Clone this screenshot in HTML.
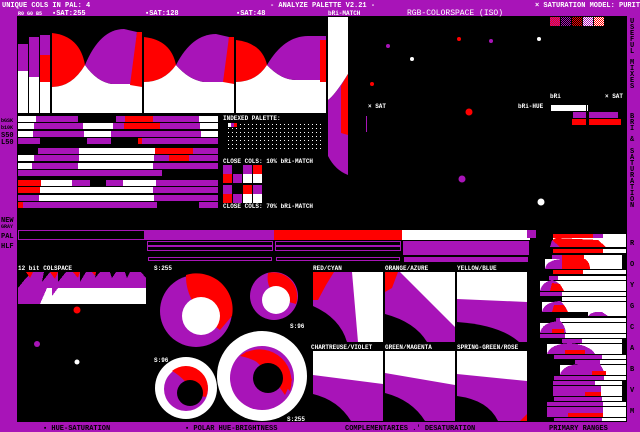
<!DOCTYPE html>
<html><head><meta charset="utf-8"><style>
html,body{margin:0;padding:0;background:#000;width:640px;height:432px;overflow:hidden}
svg{display:block}
text{font-family:"Liberation Mono",monospace;font-weight:bold;font-size:7px;fill:#fff}
.k{fill:#000}
</style></head><body>
<svg width="640" height="432" viewBox="0 0 640 432" xmlns="http://www.w3.org/2000/svg" shape-rendering="crispEdges">
<defs>
<pattern id="d1" width="2" height="2" patternUnits="userSpaceOnUse"><rect width="2" height="2" fill="#ff0000"/><rect width="1" height="1" fill="#a814b8"/><rect x="1" y="1" width="1" height="1" fill="#a814b8"/></pattern>
<pattern id="d2" width="2" height="2" patternUnits="userSpaceOnUse"><rect width="2" height="2" fill="#000"/><rect width="1" height="1" fill="#a814b8"/><rect x="1" y="1" width="1" height="1" fill="#a814b8"/></pattern>
<pattern id="d3" width="2" height="2" patternUnits="userSpaceOnUse"><rect width="2" height="2" fill="#000"/><rect width="1" height="1" fill="#ff0000"/><rect x="1" y="1" width="1" height="1" fill="#ff0000"/></pattern>
<pattern id="d4" width="2" height="2" patternUnits="userSpaceOnUse"><rect width="2" height="2" fill="#fff"/><rect width="1" height="1" fill="#a814b8"/><rect x="1" y="1" width="1" height="1" fill="#a814b8"/></pattern>
<pattern id="d5" width="2" height="2" patternUnits="userSpaceOnUse"><rect width="2" height="2" fill="#fff"/><rect width="1" height="1" fill="#ff0000"/><rect x="1" y="1" width="1" height="1" fill="#ff0000"/></pattern>
<pattern id="dots" width="4" height="4" patternUnits="userSpaceOnUse"><rect width="1" height="1" fill="#fff"/></pattern>
</defs>
<rect width="640" height="432" fill="#000"/>
<g fill="#a814b8">
<rect x="0" y="0" width="640" height="16"/>
<rect x="0" y="0" width="17" height="432"/>
<rect x="627" y="0" width="13" height="432"/>
<rect x="0" y="422" width="640" height="10"/>
</g>
<text x="2" y="7">UNIQUE COLS IN PAL: 4</text>
<text x="270" y="7">- ANALYZE PALETTE V2.21 -</text>
<text x="535" y="7">× SATURATION MODEL: PURITY</text>
<text x="18" y="15" style="font-size:5px">R0 G0 B5</text>
<text x="52" y="15">▪SAT:255</text>
<text x="145" y="15">▪SAT:128</text>
<text x="236" y="15">▪SAT:48</text>
<text x="328" y="15" style="font-size:6px">bRi-MATCH</text>
<text x="407" y="15" style="font-size:8px;font-weight:normal">RGB-COLORSPACE (ISO)</text>

<rect x="18" y="44" width="10" height="27" fill="#a814b8"/><rect x="18" y="71" width="10" height="42" fill="#fff"/>
<rect x="29" y="37" width="10" height="40" fill="#a814b8"/><rect x="29" y="77" width="10" height="36" fill="#fff"/>
<rect x="40" y="35" width="10" height="20" fill="#a814b8"/><rect x="40" y="55" width="10" height="27" fill="#ff0000"/><rect x="40" y="82" width="10" height="31" fill="#fff"/>

<g shape-rendering="auto">
<g transform="translate(52,0)">
<path d="M0 33 Q28 36 33 65 Q20 87 0 87Z" fill="#ff0000"/>
<path d="M0 87 Q20 87 33 65 Q45 82 60 84 L90 84 L90 113 L0 113Z" fill="#fff"/>
<path d="M33 65 Q48 29 72 29 L85 32 L80 84 L60 84 Q45 82 33 65Z" fill="#a814b8"/>
<path d="M85 32 L90 32 L90 87 L78 85Z" fill="#ff0000"/>
</g>
<g transform="translate(144,0)">
<path d="M0 37 Q27 40 32 65 Q20 82 0 82Z" fill="#ff0000"/>
<path d="M0 82 Q20 82 32 65 Q45 80 60 82 L90 82 L90 113 L0 113Z" fill="#fff"/>
<path d="M32 65 Q48 34 72 34 L85 37 L82 82 L60 82 Q45 80 32 65Z" fill="#a814b8"/>
<path d="M85 37 L90 37 L90 84 L79 82Z" fill="#ff0000"/>
</g>
<g transform="translate(236,0)">
<path d="M0 40 Q26 43 31 65 Q20 82 0 82Z" fill="#ff0000"/>
<path d="M0 82 Q20 82 31 65 Q45 80 60 80 L90 80 L90 113 L0 113Z" fill="#fff"/>
<path d="M31 65 Q48 36 72 36 L90 36 L90 80 L60 80 Q45 80 31 65Z" fill="#a814b8"/>
<path d="M88 40 L90 40 L90 80 L84 80Z" fill="#ff0000"/>
</g>
<rect x="320" y="40" width="6" height="42" fill="#ff0000"/><rect x="320" y="82" width="6" height="31" fill="#fff"/>
<path d="M328 17 L348 17 L348 74 Q335 95 328 100Z" fill="#fff"/>
<path d="M328 100 Q335 95 348 74 L348 175 Q335 170 328 156Z" fill="#a814b8"/>
<path d="M341 86 L348 74 L348 135 L341 133Z" fill="#ff0000"/>
</g>

<rect x="550" y="17" width="10" height="9" fill="url(#d1)"/>
<rect x="561" y="17" width="10" height="9" fill="url(#d2)"/>
<rect x="572" y="17" width="10" height="9" fill="url(#d3)"/>
<rect x="583" y="17" width="10" height="9" fill="url(#d4)"/>
<rect x="594" y="17" width="10" height="9" fill="url(#d5)"/>

<g shape-rendering="auto">
<circle cx="388" cy="46" r="2" fill="#a814b8"/>
<circle cx="459" cy="39" r="2" fill="#ff0000"/>
<circle cx="491" cy="41" r="2" fill="#a814b8"/>
<circle cx="539" cy="39" r="2" fill="#fff"/>
<circle cx="412" cy="59" r="2" fill="#fff"/>
<circle cx="372" cy="84" r="2" fill="#ff0000"/>
<circle cx="469" cy="112" r="3.5" fill="#ff0000"/>
<circle cx="462" cy="179" r="3.5" fill="#a814b8"/>
<circle cx="541" cy="202" r="3.5" fill="#fff"/>
</g>
<rect x="366" y="116" width="1" height="16" fill="#a814b8"/>
<text x="368" y="108" style="font-size:6px">× SAT</text>
<text x="518" y="108" style="font-size:6px">bRi-HUE</text>
<text x="550" y="98" style="font-size:6px">bRi</text>
<text x="605" y="98" style="font-size:6px">× SAT</text>
<rect x="551" y="105" width="35" height="6" fill="#fff"/><rect x="587" y="105" width="1" height="6" fill="#fff"/>
<rect x="573" y="112" width="13" height="6" fill="#a814b8"/><rect x="589" y="112" width="29" height="6" fill="#a814b8"/>
<rect x="572" y="119" width="14" height="6" fill="#ff0000"/><rect x="589" y="119" width="32" height="6" fill="#ff0000"/>

<g style="font-size:7px">
<text class="k" x="630" y="23">U</text><text class="k" x="630" y="29">S</text><text class="k" x="630" y="35">E</text><text class="k" x="630" y="41">F</text><text class="k" x="630" y="47">U</text><text class="k" x="630" y="53">L</text>
<text class="k" x="630" y="64">M</text><text class="k" x="630" y="70">I</text><text class="k" x="630" y="76">X</text><text class="k" x="630" y="82">E</text><text class="k" x="630" y="88">S</text>
<text class="k" x="630" y="118">B</text><text class="k" x="630" y="124">R</text><text class="k" x="630" y="130">I</text>
<text class="k" x="630" y="141">&amp;</text>
<text class="k" x="630" y="153">S</text><text class="k" x="630" y="159">A</text><text class="k" x="630" y="165">T</text><text class="k" x="630" y="171">U</text><text class="k" x="630" y="177">R</text><text class="k" x="630" y="183">A</text><text class="k" x="630" y="189">T</text><text class="k" x="630" y="195">I</text><text class="k" x="630" y="201">O</text><text class="k" x="630" y="207">N</text>
<text class="k" x="630" y="245">R</text><text class="k" x="630" y="266">O</text><text class="k" x="630" y="287">Y</text><text class="k" x="630" y="308">G</text><text class="k" x="630" y="329">C</text><text class="k" x="630" y="350">A</text><text class="k" x="630" y="371">B</text><text class="k" x="630" y="392">V</text><text class="k" x="630" y="413">M</text>
</g>

<text class="k" x="1" y="122" style="font-size:5px">bGSK</text>
<text class="k" x="1" y="129" style="font-size:5px">b10K</text>
<text class="k" x="1" y="137">S50</text>
<text class="k" x="1" y="144">L50</text>
<text class="k" x="1" y="222">NEW</text>
<text class="k" x="1" y="228" style="font-size:5px">GRAY</text>
<text class="k" x="1" y="238">PAL</text>
<text class="k" x="1" y="248">HLF</text>

<g>
<rect x="18" y="116" width="18" height="6" fill="#fff"/><rect x="36" y="116" width="42" height="6" fill="#a814b8"/><rect x="116" y="116" width="9" height="6" fill="#a814b8"/><rect x="125" y="116" width="28" height="6" fill="#ff0000"/><rect x="153" y="116" width="46" height="6" fill="#a814b8"/><rect x="199" y="116" width="19" height="6" fill="#fff"/>
<rect x="18" y="123" width="16" height="6" fill="#fff"/><rect x="34" y="123" width="49" height="6" fill="#a814b8"/><rect x="83" y="123" width="30" height="6" fill="#fff"/><rect x="113" y="123" width="11" height="6" fill="#a814b8"/><rect x="124" y="123" width="36" height="6" fill="#ff0000"/><rect x="160" y="123" width="40" height="6" fill="#a814b8"/><rect x="200" y="123" width="18" height="6" fill="#fff"/>
<rect x="18" y="131" width="15" height="6" fill="#fff"/><rect x="33" y="131" width="51" height="6" fill="#a814b8"/><rect x="84" y="131" width="27" height="6" fill="#fff"/><rect x="111" y="131" width="90" height="6" fill="#a814b8"/><rect x="201" y="131" width="17" height="6" fill="#fff"/>
<rect x="18" y="138" width="22" height="6" fill="#a814b8"/><rect x="87" y="138" width="24" height="6" fill="#a814b8"/><rect x="138" y="138" width="4" height="6" fill="#ff0000"/><rect x="142" y="138" width="76" height="6" fill="#a814b8"/>
<rect x="38" y="148" width="41" height="6" fill="#a814b8"/><rect x="79" y="148" width="76" height="6" fill="#fff"/><rect x="155" y="148" width="38" height="6" fill="#ff0000"/><rect x="193" y="148" width="25" height="6" fill="#a814b8"/>
<rect x="18" y="155" width="16" height="6" fill="#fff"/><rect x="34" y="155" width="45" height="6" fill="#a814b8"/><rect x="79" y="155" width="75" height="6" fill="#fff"/><rect x="154" y="155" width="15" height="6" fill="#a814b8"/><rect x="169" y="155" width="20" height="6" fill="#ff0000"/><rect x="189" y="155" width="29" height="6" fill="#a814b8"/>
<rect x="18" y="163" width="14" height="6" fill="#fff"/><rect x="32" y="163" width="46" height="6" fill="#a814b8"/><rect x="78" y="163" width="75" height="6" fill="#fff"/><rect x="153" y="163" width="65" height="6" fill="#a814b8"/>
<rect x="18" y="170" width="144" height="6" fill="#a814b8"/>
<rect x="18" y="180" width="23" height="6" fill="#ff0000"/><rect x="41" y="180" width="31" height="6" fill="#fff"/><rect x="72" y="180" width="18" height="6" fill="#a814b8"/><rect x="106" y="180" width="17" height="6" fill="#a814b8"/><rect x="123" y="180" width="33" height="6" fill="#fff"/><rect x="156" y="180" width="62" height="6" fill="#a814b8"/>
<rect x="18" y="187" width="22" height="6" fill="#ff0000"/><rect x="40" y="187" width="113" height="6" fill="#fff"/><rect x="153" y="187" width="65" height="6" fill="#a814b8"/>
<rect x="18" y="195" width="21" height="6" fill="#a814b8"/><rect x="39" y="195" width="115" height="6" fill="#fff"/><rect x="154" y="195" width="64" height="6" fill="#a814b8"/>
<rect x="18" y="202" width="5" height="6" fill="#ff0000"/><rect x="23" y="202" width="134" height="6" fill="#a814b8"/><rect x="199" y="202" width="19" height="6" fill="#a814b8"/>
</g>

<text x="223" y="120" style="font-size:6px">INDEXED PALETTE:</text>
<rect x="226" y="122" width="96" height="30" fill="url(#dots)"/>
<rect x="228" y="123" width="3" height="4" fill="#fff"/><rect x="231" y="123" width="3" height="4" fill="#a814b8"/><rect x="234" y="123" width="3" height="4" fill="#ff0000"/>
<text x="223" y="163" style="font-size:6px">CLOSE COLS: 10% bRi-MATCH</text>
<g>
<rect x="223" y="165" width="9" height="9" fill="#a814b8"/><rect x="223" y="174" width="9" height="9" fill="#ff0000"/><rect x="233" y="174" width="9" height="9" fill="#a814b8"/><rect x="243" y="165" width="9" height="9" fill="#a814b8"/><rect x="243" y="174" width="9" height="9" fill="#fff"/><rect x="253" y="165" width="9" height="9" fill="#ff0000"/><rect x="253" y="174" width="9" height="9" fill="#fff"/>
<rect x="223" y="185" width="9" height="9" fill="#a814b8"/><rect x="223" y="194" width="9" height="9" fill="#ff0000"/><rect x="233" y="194" width="9" height="9" fill="#a814b8"/><rect x="243" y="185" width="9" height="9" fill="#ff0000"/><rect x="243" y="194" width="9" height="9" fill="#fff"/><rect x="253" y="185" width="9" height="9" fill="#a814b8"/><rect x="253" y="194" width="9" height="9" fill="#fff"/>
</g>
<text x="223" y="208" style="font-size:6px">CLOSE COLS: 70% bRi-MATCH</text>

<rect x="18.5" y="230.5" width="126" height="9" fill="none" stroke="#a814b8"/>
<rect x="145" y="230" width="129" height="10" fill="#a814b8"/>
<rect x="274" y="230" width="128" height="10" fill="#ff0000"/>
<rect x="402" y="230" width="128" height="10" fill="#fff"/>
<g fill="none" stroke="#a814b8">
<rect x="147.5" y="241.5" width="125" height="4"/><rect x="147.5" y="246.5" width="125" height="4"/><rect x="148.5" y="257.5" width="123" height="3"/>
<rect x="275.5" y="241.5" width="125" height="4"/><rect x="275.5" y="246.5" width="125" height="4"/><rect x="276.5" y="257.5" width="123" height="3"/>
</g>
<rect x="403" y="241" width="126" height="14" fill="#a814b8"/><rect x="404" y="257" width="124" height="5" fill="#a814b8"/>

<text x="18" y="270" style="font-size:6px">12 bit COLSPACE</text>
<rect x="18" y="272" width="128" height="32" fill="#a814b8"/>
<path d="M40 304 L47 288 L52 288 L52 296 L58 288 L146 288 L146 304Z" fill="#fff"/>
<path d="M18 272 L18 288 L26 278 L33 272Z M44 272 L50 272 L42 282Z M58 272 L66 272 L58 282Z M80 272 L86 272 L80 282Z M96 272 L100 272 L95 278Z M110 272 L116 272 L112 278Z M125 272 L130 272 L127 278Z M141 272 L146 272 L146 278Z" fill="#000"/>
<path d="M26 272 L33 272 L30 278Z M50 272 L58 272 L55 279Z M73 272 L80 272 L78 278Z M92 272 L96 272 L95 276Z" fill="#ff0000"/>
<g shape-rendering="auto">
<circle cx="77" cy="310" r="3.5" fill="#ff0000"/>
<circle cx="37" cy="344" r="3" fill="#a814b8"/>
<circle cx="77" cy="362" r="2.5" fill="#fff"/>
</g>

<text x="154" y="270" style="font-size:6px">S:255</text>
<text x="290" y="328" style="font-size:6px">S:96</text>
<text x="154" y="362" style="font-size:6px">S:96</text>
<text x="287" y="421" style="font-size:6px">S:255</text>
<g shape-rendering="auto">
<circle cx="196" cy="311" r="36" fill="#a814b8"/>
<path d="M186 275 A36 36 0 0 1 232 316 L220 330 Q185 305 186 275Z" fill="#ff0000"/>
<circle cx="201" cy="316" r="19" fill="#fff"/>
<circle cx="274" cy="296" r="24" fill="#a814b8"/>
<path d="M268 273 A24 24 0 0 1 296 304 L282 300 Q265 290 268 273Z" fill="#ff0000"/>
<circle cx="276" cy="300" r="14" fill="#fff"/>
<circle cx="186" cy="388" r="31" fill="#fff"/>
<circle cx="186" cy="389" r="22" fill="#a814b8"/>
<path d="M172 371 A22 22 0 0 1 206 397 L195 395 Q185 378 172 371Z" fill="#ff0000"/>
<circle cx="190" cy="393" r="13" fill="#000"/>
<circle cx="262" cy="376" r="45" fill="#fff"/>
<circle cx="262" cy="378" r="32" fill="#a814b8"/>
<path d="M240 356 A32 32 0 0 1 290 391 L280 381 Q262 360 240 356Z" fill="#ff0000"/>
<path d="M245 352 Q262 348 285 362 L292 380 L285 395 Q268 370 245 352Z" fill="#ff0000"/>
<circle cx="268" cy="378" r="15" fill="#000"/>
</g>

<text x="313" y="270" style="font-size:6px">RED/CYAN</text>
<text x="385" y="270" style="font-size:6px">ORANGE/AZURE</text>
<text x="457" y="270" style="font-size:6px">YELLOW/BLUE</text>
<text x="311" y="349" style="font-size:6px">CHARTREUSE/VIOLET</text>
<text x="385" y="349" style="font-size:6px">GREEN/MAGENTA</text>
<text x="457" y="349" style="font-size:6px">SPRING-GREEN/ROSE</text>
<g shape-rendering="auto">
<rect x="313" y="272" width="70" height="70" fill="#a814b8"/>
<path d="M352 272 L383 272 L383 342 L358 342Z" fill="#fff"/>
<path d="M313 272 L334 272 L326 285 L318 300 L313 300Z" fill="#ff0000"/>
<path d="M313 306 Q340 318 347 342 L313 342Z" fill="#000"/>
<rect x="385" y="272" width="70" height="70" fill="#a814b8"/>
<path d="M400 272 L455 272 L455 327Z" fill="#fff"/>
<path d="M385 272 L398 272 L392 288 L385 292Z" fill="#ff0000"/>
<path d="M385 314 Q415 322 427 342 L385 342Z" fill="#000"/>
<rect x="457" y="272" width="70" height="70" fill="#a814b8"/>
<path d="M457 272 L527 272 L527 302 L457 299Z" fill="#fff"/>
<path d="M457 322 Q500 325 519 342 L457 342Z" fill="#000"/>
<rect x="313" y="351" width="70" height="70" fill="#a814b8"/>
<path d="M313 351 L383 351 L383 384 L313 375Z" fill="#fff"/>
<path d="M313 394 Q338 400 351 421 L313 421Z" fill="#000"/>
<rect x="385" y="351" width="70" height="70" fill="#a814b8"/>
<path d="M385 351 L455 351 L455 385 L385 373Z" fill="#fff"/>
<path d="M385 393 Q412 400 425 421 L385 421Z" fill="#000"/>
<rect x="457" y="351" width="70" height="70" fill="#a814b8"/>
<path d="M457 351 L527 351 L527 381 L457 374Z" fill="#fff"/>
<path d="M457 396 Q488 400 498 421 L457 421Z" fill="#000"/>
<path d="M520 421 L527 414 L527 421Z" fill="#ff0000"/>
</g>

<g>
<rect x="553" y="234" width="73" height="4" fill="#fff"/><rect x="553" y="234" width="40" height="4" fill="#ff0000"/><rect x="593" y="234" width="10" height="4" fill="#a814b8"/>
<rect x="553" y="238" width="73" height="9" fill="#fff"/><path d="M552 247 Q550 240 556 238 L598 240 L606 247Z" fill="#ff0000"/><path d="M550 247 L552 240 L560 247Z" fill="#a814b8"/>
<rect x="553" y="249" width="73" height="4" fill="#fff"/><rect x="553" y="249" width="50" height="4" fill="#ff0000"/>
<rect x="552" y="255" width="70" height="4" fill="#fff"/><rect x="552" y="255" width="10" height="4" fill="#a814b8"/><rect x="562" y="255" width="22" height="4" fill="#ff0000"/>
<rect x="545" y="259" width="77" height="10" fill="#fff"/><path d="M545 269 Q546 260 562 259 L585 259 Q590 262 590 269Z" fill="#ff0000"/><path d="M545 269 Q546 260 562 259 L562 269Z" fill="#a814b8"/>
<rect x="553" y="270" width="73" height="4" fill="#fff"/><rect x="553" y="270" width="30" height="4" fill="#ff0000"/>
<rect x="549" y="276" width="77" height="4" fill="#fff"/><rect x="549" y="276" width="9" height="4" fill="#a814b8"/>
<rect x="540" y="281" width="86" height="10" fill="#fff"/><path d="M540 291 Q542 282 552 280 Q560 282 564 291Z" fill="#a814b8"/><path d="M550 291 L552 283 L560 284 L564 291Z" fill="#ff0000"/>
<rect x="540" y="292" width="86" height="4" fill="#fff"/><rect x="540" y="292" width="22" height="4" fill="#a814b8"/>
<rect x="562" y="297" width="64" height="4" fill="#fff"/>
<rect x="542" y="302" width="84" height="10" fill="#fff"/><path d="M542 312 Q544 302 560 301 Q565 305 568 312Z" fill="#a814b8"/><path d="M552 312 L554 305 L564 305 L568 312Z" fill="#ff0000"/>
<rect x="588" y="312" width="38" height="4" fill="#fff"/><path d="M588 316 Q592 311 602 312 L608 316Z" fill="#a814b8"/>
<rect x="556" y="318" width="70" height="4" fill="#fff"/><rect x="556" y="318" width="4" height="4" fill="#a814b8"/>
<rect x="540" y="323" width="86" height="10" fill="#fff"/><path d="M540 333 Q542 322 560 321 Q565 325 566 333Z" fill="#a814b8"/><rect x="552" y="329" width="12" height="4" fill="#ff0000"/>
<rect x="540" y="334" width="86" height="4" fill="#fff"/><rect x="540" y="334" width="25" height="4" fill="#a814b8"/>
<rect x="562" y="339" width="60" height="4" fill="#fff"/><rect x="562" y="339" width="20" height="4" fill="#a814b8"/>
<rect x="547" y="344" width="75" height="10" fill="#fff"/><path d="M547 354 Q550 344 570 343 Q590 345 595 354Z" fill="#a814b8"/><rect x="565" y="350" width="20" height="4" fill="#ff0000"/>
<rect x="554" y="355" width="72" height="4" fill="#fff"/><rect x="554" y="355" width="48" height="4" fill="#a814b8"/>
<rect x="575" y="360" width="51" height="4" fill="#fff"/><rect x="575" y="360" width="25" height="4" fill="#a814b8"/>
<rect x="560" y="365" width="66" height="10" fill="#fff"/><path d="M560 375 Q562 365 580 364 L600 364 L606 375Z" fill="#a814b8"/><rect x="592" y="371" width="14" height="4" fill="#ff0000"/>
<rect x="554" y="376" width="72" height="4" fill="#fff"/><rect x="554" y="376" width="50" height="4" fill="#a814b8"/>
<rect x="553" y="381" width="69" height="4" fill="#fff"/><rect x="553" y="381" width="42" height="4" fill="#a814b8"/>
<rect x="553" y="386" width="69" height="10" fill="#fff"/><rect x="553" y="386" width="48" height="10" fill="#a814b8"/><rect x="585" y="392" width="16" height="4" fill="#ff0000"/>
<rect x="554" y="397" width="68" height="4" fill="#fff"/><rect x="554" y="397" width="48" height="4" fill="#a814b8"/>
<rect x="547" y="402" width="79" height="4" fill="#fff"/><rect x="547" y="402" width="56" height="4" fill="#a814b8"/>
<rect x="547" y="407" width="79" height="10" fill="#fff"/><rect x="547" y="407" width="56" height="10" fill="#a814b8"/><rect x="568" y="413" width="35" height="4" fill="#ff0000"/>
<rect x="554" y="418" width="72" height="3" fill="#fff"/><rect x="554" y="418" width="48" height="3" fill="#a814b8"/>
</g>
<rect x="527" y="230" width="9" height="8" fill="#a814b8"/>

<g style="font-size:7px;font-weight:normal">
<text class="k" x="43" y="430">▪ HUE-SATURATION</text>
<text class="k" x="185" y="430">▪ POLAR HUE-BRIGHTNESS</text>
<text class="k" x="345" y="430">COMPLEMENTARIES .' DESATURATION</text>
<text class="k" x="549" y="430">PRIMARY RANGES</text>
</g>
</svg>
</body></html>
